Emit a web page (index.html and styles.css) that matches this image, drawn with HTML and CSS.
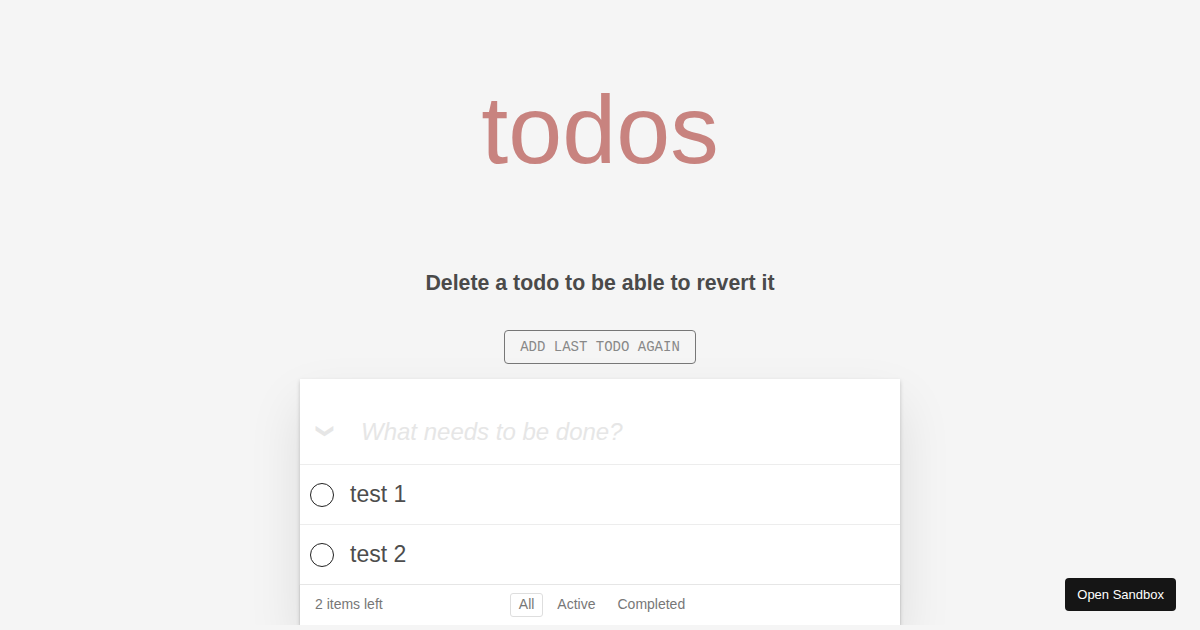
FILE: index.html
```html
<!DOCTYPE html>
<html lang="en">
<head>
  <meta charset="UTF-8" />
  <meta name="viewport" content="width=device-width, initial-scale=1.0"/>
  <title>Todos - Revert</title>
  <link rel="stylesheet" href="styles.css">
</head>
<body>
  <div class="page">
    <h1 class="title">todos</h1>

    <h2 class="hint">Delete a todo to be able to revert it</h2>

    <div class="revert-row">
      <button class="revert-btn" type="button">ADD LAST TODO AGAIN</button>
    </div>

    <section class="todoapp">
      <header class="todo-header">
        <span class="toggle-all">&#10095;</span>
        <input class="new-todo" type="text" placeholder="What needs to be done?" />
      </header>

      <ul class="todo-list">
        <li class="todo-item">
          <span class="toggle"></span>
          <label>test 1</label>
        </li>
        <li class="todo-item">
          <span class="toggle"></span>
          <label>test 2</label>
        </li>
      </ul>

      <footer class="todo-footer">
        <span class="todo-count">2 items left</span>
        <ul class="filters">
          <li><a class="selected" href="#/">All</a></li>
          <li><a href="#/active">Active</a></li>
          <li><a href="#/completed">Completed</a></li>
        </ul>
        <span></span>
      </footer>
    </section>
  </div>

  <a class="sandbox-btn" href="#">Open Sandbox</a>
</body>
</html>
```

FILE: styles.css
```css
* {
  margin: 0;
  padding: 0;
  box-sizing: border-box;
}

body {
  font-family: "Liberation Sans", Arial, sans-serif;
  font-size: 14px;
  line-height: 1.4em;
  background: #f5f5f5;
  color: #4d4d4d;
}

.page {
  width: 600px;
  margin: 0 auto;
}

.title {
  margin-top: 80px;
  font-size: 97px;
  line-height: 100px;
  font-weight: normal;
  text-align: center;
  color: #c8837f;
}

.hint {
  margin-top: 91px;
  font-size: 21.3px;
  line-height: 24px;
  font-weight: bold;
  text-align: center;
  color: #4a4a4a;
}

.revert-row {
  display: flex;
  justify-content: center;
  margin-top: 35px;
}

.revert-btn {
  font-family: "Liberation Mono", "Courier New", monospace;
  font-size: 14px;
  line-height: 16px;
  color: #888;
  background: transparent;
  border: 1px solid #777;
  border-radius: 4px;
  padding: 8px 15px;
  cursor: pointer;
}

.todoapp {
  margin-top: 15px;
  background: #fff;
  box-shadow: 0 2px 4px 0 rgba(0, 0, 0, 0.2), 0 25px 50px 0 rgba(0, 0, 0, 0.1);
}

.todo-header {
  display: flex;
  align-items: center;
  padding-top: 19px;
}

.toggle-all {
  width: 50px;
  margin-right: 10px;
  text-align: center;
  font-size: 17px;
  font-weight: bold;
  color: #e6e6e6;
  transform: rotate(90deg);
}

.new-todo {
  flex: 1;
  height: 66px;
  padding: 17px 16px 15px 1px;
  border: none;
  outline: none;
  font-family: inherit;
  font-size: 24px;
  color: #4d4d4d;
  background: transparent;
}

.new-todo::placeholder {
  font-style: italic;
  color: #e6e6e6;
}

.todo-list {
  list-style: none;
}

.todo-item {
  display: flex;
  align-items: center;
  height: 60px;
  border-top: 1px solid #ededed;
}

.toggle {
  width: 24px;
  height: 24px;
  margin: 0 16px 0 10px;
  border: 1px solid #222;
  border-radius: 50%;
}

.todo-item label {
  font-size: 23px;
  line-height: 1.2;
  color: #4d4d4d;
}

.todo-footer {
  display: grid;
  grid-template-columns: 1fr auto 1fr;
  align-items: center;
  height: 41px;
  padding: 0 15px;
  border-top: 1px solid #e6e6e6;
  color: #777;
  box-shadow: 0 1px 1px rgba(0, 0, 0, 0.2),
    0 8px 0 -3px #f6f6f6,
    0 9px 1px -3px rgba(0, 0, 0, 0.2),
    0 16px 0 -6px #f6f6f6,
    0 17px 2px -6px rgba(0, 0, 0, 0.2);
}

.filters {
  display: flex;
  list-style: none;
  margin-left: 3px;
}

.filters a {
  display: block;
  margin: 3px;
  padding: 1px 7px;
  color: #777;
  text-decoration: none;
  border: 1px solid transparent;
  border-radius: 3px;
}

.filters a.selected {
  padding: 1px 8px;
  border-color: #dedede;
}

.sandbox-btn {
  position: fixed;
  right: 24px;
  bottom: 19px;
  padding: 8px 12px;
  font-size: 13px;
  line-height: 17px;
  color: #fff;
  background: #151515;
  border-radius: 4px;
  text-decoration: none;
}
```
